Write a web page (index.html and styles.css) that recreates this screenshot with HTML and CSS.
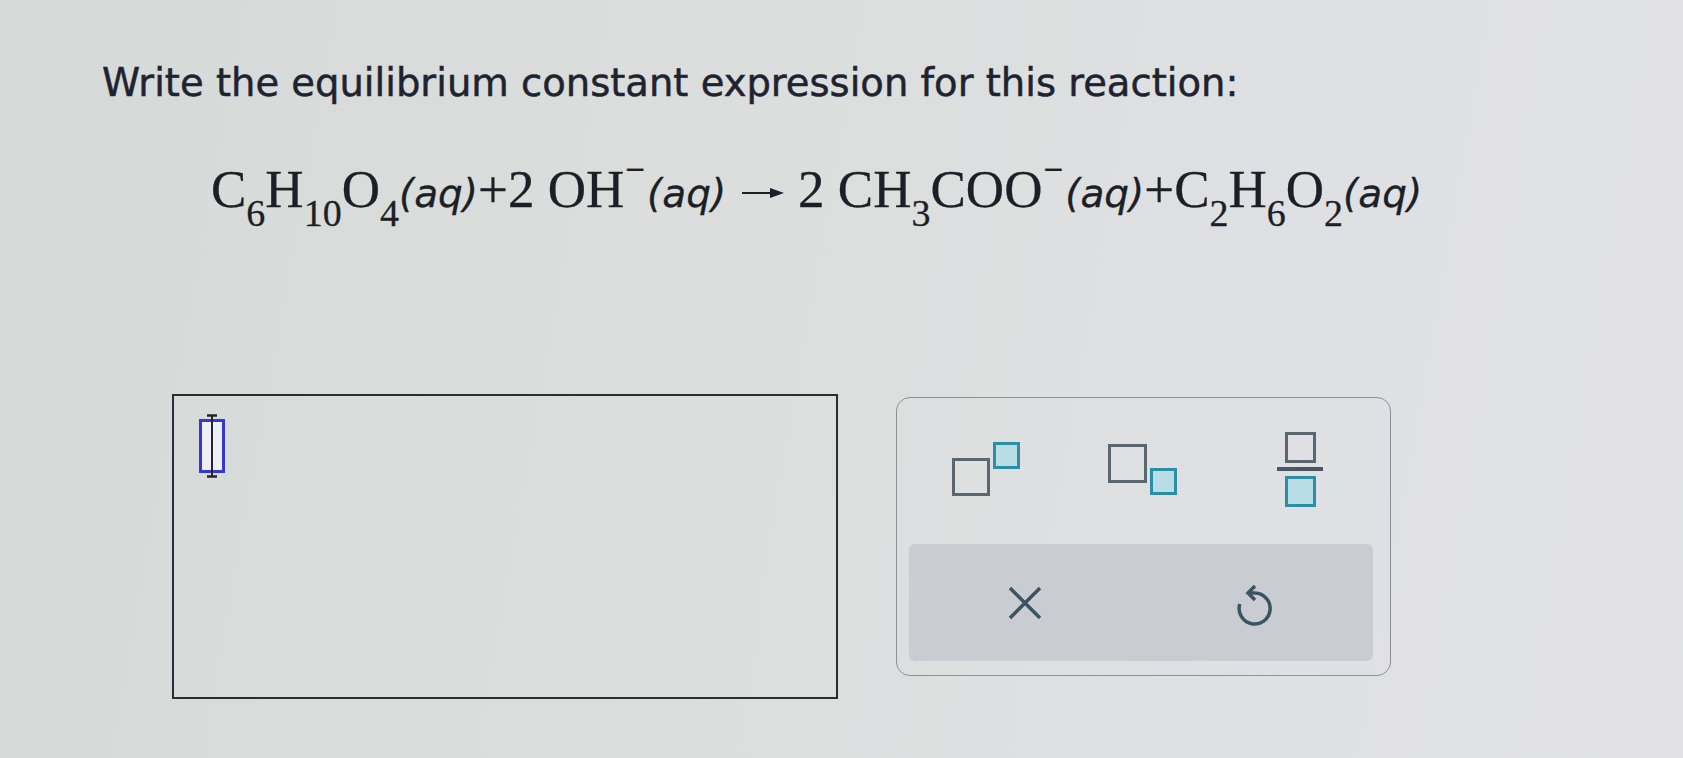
FILE: index.html
```html
<!DOCTYPE html>
<html lang="en">
<head>
<meta charset="utf-8">
<title>Equilibrium constant expression</title>
<link rel="stylesheet" href="styles.css">
</head>
<body>
<div class="page">
  <div class="title">Write the equilibrium constant expression for this reaction:</div>
  <div class="eq">C<sub>6</sub>H<sub>10</sub>O<sub>4</sub><span class="aq">(aq)</span>+2 OH<sup class="chg">−</sup><span class="aq gap">(aq)</span><span class="arrow"><svg width="42" height="12" viewBox="0 0 42 12"><path d="M0 6 H30" stroke="#1c1f26" stroke-width="2"/><path d="M28 1 L42 6 L28 11 Z" fill="#1c1f26"/></svg></span>2 CH<sub>3</sub>COO<sup class="chg">−</sup><span class="aq gap">(aq)</span>+C<sub>2</sub>H<sub>6</sub>O<sub>2</sub><span class="aq">(aq)</span></div>
  <div class="work">
    <div class="answer">
      <svg class="cursor" width="32" height="66" viewBox="0 0 32 66">
        <rect x="4.5" y="7.5" width="23" height="51" fill="#eef0f6" stroke="#3737d2" stroke-width="3"/>
        <path d="M16 3 V63" stroke="#23252d" stroke-width="2"/>
        <path d="M11 2.5 H21 M11 63.5 H21" stroke="#23252d" stroke-width="2.5"/>
      </svg>
    </div>
    <div class="panel">
      <div class="tools">
        <div class="tool">
          <svg width="70" height="56" viewBox="0 0 70 56">
            <rect x="1.5" y="17.5" width="35" height="35" fill="none" stroke="#5a6670" stroke-width="3"/>
            <rect x="42.5" y="1.5" width="24" height="24" fill="#b9dde4" stroke="#2a8ea5" stroke-width="3"/>
          </svg>
        </div>
        <div class="tool">
          <svg width="70" height="52" viewBox="0 0 70 52">
            <rect x="1.5" y="1.5" width="36" height="36" fill="none" stroke="#5a6670" stroke-width="3"/>
            <rect x="43.5" y="25.5" width="24" height="24" fill="#b9dde4" stroke="#2a8ea5" stroke-width="3"/>
          </svg>
        </div>
        <div class="tool">
          <svg width="48" height="76" viewBox="0 0 48 76">
            <rect x="10.5" y="1.5" width="28" height="28" fill="none" stroke="#5a6670" stroke-width="3"/>
            <rect x="1" y="35" width="46" height="4" fill="#4c5660"/>
            <rect x="10.5" y="45.5" width="28" height="28" fill="#b9dde4" stroke="#2a8ea5" stroke-width="3"/>
          </svg>
        </div>
      </div>
      <div class="actions">
        <div class="action">
          <svg width="34" height="34" viewBox="0 0 34 34">
            <path d="M2 2 L32 32 M32 2 L2 32" stroke="#3a5461" stroke-width="3.5"/>
          </svg>
        </div>
        <div class="action undo">
          <svg width="38" height="46" viewBox="0 0 38 46">
            <path d="M3.8 24 A15.5 15.5 0 1 0 19 13 H13" fill="none" stroke="#3a5461" stroke-width="3.5"/>
            <path d="M19 6 L12 13 L19 20" fill="none" stroke="#3a5461" stroke-width="3.5"/>
          </svg>
        </div>
      </div>
    </div>
  </div>
</div>
</body>
</html>
```
FILE: styles.css
```css
html, body {
  margin: 0;
  padding: 0;
}
body {
  width: 1683px;
  height: 758px;
  overflow: hidden;
  background: linear-gradient(100deg, #d5d9d7 0%, #dbdedc 40%, #dfe0e3 75%, #e2e2e6 100%);
}
.page {
  padding: 60px 0 0 102px;
}
.title {
  font-family: "DejaVu Sans", Verdana, sans-serif;
  font-size: 38.5px;
  line-height: 46px;
  color: #1f2330;
  -webkit-text-stroke: 0.5px #1f2330;
  white-space: nowrap;
}
.eq {
  margin: 51px 0 0 109px;
  font-family: "Liberation Serif", "Times New Roman", serif;
  font-size: 53px;
  line-height: 64px;
  color: #1c1f26;
  -webkit-text-stroke: 0.3px #1c1f26;
  white-space: nowrap;
}
.eq sub {
  font-size: 38px;
  line-height: 0;
  vertical-align: -19px;
}
.eq sup.chg {
  font-family: "DejaVu Sans", Verdana, sans-serif;
  font-size: 26px;
  line-height: 0;
  vertical-align: 29px;
  letter-spacing: -3px;
}
.aq {
  font-family: "DejaVu Sans", Verdana, sans-serif;
  font-style: italic;
  font-size: 39px;
  line-height: 0;
}
.aq.gap {
  margin-left: 4px;
}
.arrow {
  display: inline-block;
  line-height: 0;
  margin: 0 14px 0 16px;
  vertical-align: 8px;
}
.work {
  display: flex;
  align-items: flex-start;
  gap: 58px;
  margin: 173px 0 0 70px;
}
.answer {
  box-sizing: border-box;
  width: 666px;
  height: 305px;
  border: 2px solid #2b2c3a;
  padding: 17px 0 0 22px;
}
.cursor {
  display: block;
}
.panel {
  box-sizing: border-box;
  width: 495px;
  height: 279px;
  margin-top: 3px;
  border: 1.5px solid #8b9198;
  border-radius: 14px;
  padding: 12px 12px 14px;
  display: flex;
  flex-direction: column;
  gap: 14px;
}
.tools {
  height: 120px;
  display: grid;
  grid-template-columns: repeat(3, 1fr);
  align-items: center;
  justify-items: center;
}
.tool svg {
  display: block;
}
.actions {
  flex: 1;
  margin-right: 5px;
  background: #c9cdd2;
  border-radius: 6px;
  display: grid;
  grid-template-columns: 1fr 1fr;
  align-items: center;
  justify-items: center;
}
.action svg {
  display: block;
}
.undo {
  margin-right: 4px;
}
```
